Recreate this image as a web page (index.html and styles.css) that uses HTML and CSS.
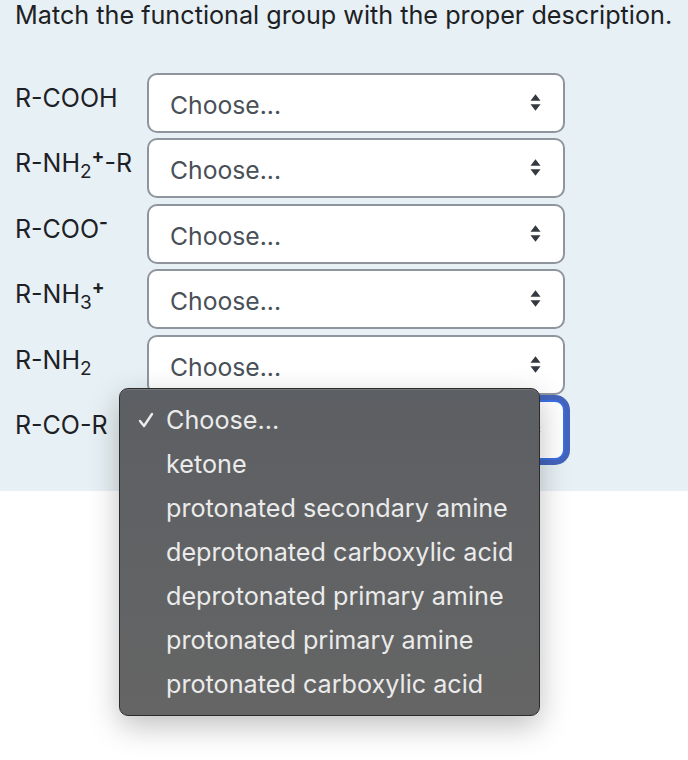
FILE: index.html
```html
<!DOCTYPE html>
<html lang="en">
<head>
<meta charset="utf-8">
<link rel="stylesheet" href="styles.css">
<title>Match</title>
</head>
<body>
<div class="que">
  <p class="qtext">Match the functional group with the proper description.</p>
  <div class="rows">
    <div class="row"><div class="label">R-COOH</div><div class="select"><span>Choose...</span><svg class="arr" viewBox="0 0 12 18"><path d="M6 0 L11.5 7 H0.5 Z M6 18 L11.5 11 H0.5 Z" fill="#343a40"/></svg></div></div>
    <div class="row"><div class="label">R-NH<sub>2</sub><sup>+</sup>-R</div><div class="select"><span>Choose...</span><svg class="arr" viewBox="0 0 12 18"><path d="M6 0 L11.5 7 H0.5 Z M6 18 L11.5 11 H0.5 Z" fill="#343a40"/></svg></div></div>
    <div class="row"><div class="label">R-COO<sup>-</sup></div><div class="select"><span>Choose...</span><svg class="arr" viewBox="0 0 12 18"><path d="M6 0 L11.5 7 H0.5 Z M6 18 L11.5 11 H0.5 Z" fill="#343a40"/></svg></div></div>
    <div class="row"><div class="label">R-NH<sub>3</sub><sup>+</sup></div><div class="select"><span>Choose...</span><svg class="arr" viewBox="0 0 12 18"><path d="M6 0 L11.5 7 H0.5 Z M6 18 L11.5 11 H0.5 Z" fill="#343a40"/></svg></div></div>
    <div class="row"><div class="label">R-NH<sub>2</sub></div><div class="select"><span>Choose...</span><svg class="arr" viewBox="0 0 12 18"><path d="M6 0 L11.5 7 H0.5 Z M6 18 L11.5 11 H0.5 Z" fill="#343a40"/></svg></div></div>
    <div class="row"><div class="label">R-CO-R</div><div class="select focus"><span>Choose...</span><svg class="arr" viewBox="0 0 12 18"><path d="M6 0 L11.5 7 H0.5 Z M6 18 L11.5 11 H0.5 Z" fill="#343a40"/></svg></div></div>
  </div>
  <div class="menu">
    <div class="opt sel"><svg class="check" viewBox="0 0 16 16"><path d="M2 9 L6 14 L14 2" fill="none" stroke="#ececec" stroke-width="2.4" stroke-linecap="round" stroke-linejoin="round"/></svg>Choose...</div>
    <div class="opt">ketone</div>
    <div class="opt">protonated secondary amine</div>
    <div class="opt">deprotonated carboxylic acid</div>
    <div class="opt">deprotonated primary amine</div>
    <div class="opt">protonated primary amine</div>
    <div class="opt">protonated carboxylic acid</div>
  </div>
</div>
</body>
</html>
```
FILE: styles.css
```css
html, body {
  margin: 0;
  padding: 0;
  background: #ffffff;
  font-family: Inter, "Noto Sans", "Liberation Sans", sans-serif;
}
body {
  min-height: 760px;
}
.que {
  position: relative;
  background: #e7f0f4;
  height: 491px;
  box-sizing: border-box;
  padding: 0 0 0 15px;
}
.qtext {
  margin: 0;
  font-size: 25.2px;
  line-height: 30px;
  color: #1d2125;
}
.rows {
  margin-top: 43px;
  display: flex;
  flex-direction: column;
}
.row {
  display: flex;
  align-items: flex-start;
  height: 65.4px;
}
.label {
  width: 132px;
  padding-top: 11px;
  font-size: 25px;
  line-height: 28px;
  color: #1d2125;
  white-space: nowrap;
}
.label sub, .label sup {
  font-size: 19px;
  line-height: 0;
}
.label sub { vertical-align: -6px; }
.label sup { vertical-align: 9px; font-weight: 700; }
.select {
  box-sizing: border-box;
  width: 418px;
  height: 60px;
  border: 2px solid #8f959e;
  border-radius: 10px;
  background: #ffffff;
  display: flex;
  align-items: center;
  justify-content: space-between;
  padding: 4px 22px 0 21px;
  font-size: 24.7px;
  color: #495057;
}
.select.focus {
  border-color: #3b6ee0;
  box-shadow: 0 0 0 5px #4464bd;
}
.arr {
  width: 11px;
  height: 17px;
  margin-top: -5px;
}
.menu {
  position: absolute;
  left: 119px;
  top: 388px;
  width: 421px;
  height: 328px;
  box-sizing: border-box;
  border: 1px solid #2b2b2b;
  border-radius: 9px;
  background: linear-gradient(#5c5f63, #656565);
  box-shadow: 0 10px 30px rgba(0,0,0,0.25), inset 0 1px 0 rgba(255,255,255,0.15);
  padding-top: 9px;
  z-index: 5;
}
.opt {
  height: 44px;
  line-height: 44px;
  padding-left: 46px;
  position: relative;
  font-size: 25.2px;
  color: #ebebeb;
}
.check {
  position: absolute;
  left: 18px;
  top: 14px;
  width: 16px;
  height: 16px;
}
```
